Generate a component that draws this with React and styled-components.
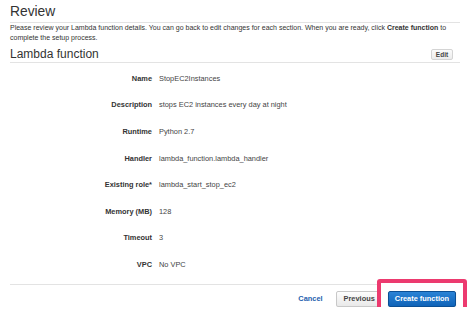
import React from "react";
import styled, { createGlobalStyle } from "styled-components";

const GlobalStyle = createGlobalStyle`
  html, body {
    margin: 0;
    padding: 0;
    background: #fff;
  }
  body {
    font-family: "Liberation Sans", Arial, Helvetica, sans-serif;
    color: #333;
  }
`;

const Page = styled.div`
  width: 450px;
  padding: 0 14px 0 10px;
`;

const Title = styled.h2`
  margin: 0;
  padding: 4px 0 2px;
  font-size: 13.8px;
  font-weight: normal;
  line-height: 16px;
  color: #333;
  border-bottom: 1px solid #e3e3e3;
`;

const Intro = styled.p`
  margin: 0;
  font-size: 7px;
  line-height: 10px;
  color: #333;
  b {
    font-weight: bold;
  }
`;

const SectionHeader = styled.div`
  display: flex;
  justify-content: space-between;
  align-items: flex-end;
  margin-top: 4px;
  padding-bottom: 1px;
  border-bottom: 1px solid #e3e3e3;
`;

const SectionTitle = styled.h3`
  margin: 0;
  font-size: 12px;
  font-weight: normal;
  line-height: 14px;
  color: #333;
`;

const SmallButton = styled.button`
  font-family: inherit;
  font-size: 6.5px;
  font-weight: bold;
  color: #444;
  height: 11px;
  width: 22px;
  padding: 0;
  margin: 0 7px 1px 0;
  border: 1px solid #d4d4d4;
  border-radius: 2px;
  background: linear-gradient(#fbfbfb, #ececec);
`;

const DetailList = styled.dl`
  margin: 0;
  padding-top: 2px;
`;

const Row = styled.div`
  display: grid;
  grid-template-columns: 142px 1fr;
  column-gap: 7px;
  align-items: center;
  height: 26.6px;
`;

const Label = styled.dt`
  text-align: right;
  font-size: 7.4px;
  font-weight: bold;
  color: #333;
`;

const Value = styled.dd`
  margin: 0;
  font-size: 7.4px;
  color: #444;
`;

const Footer = styled.div`
  display: flex;
  justify-content: flex-end;
  align-items: center;
  margin-top: 6px;
  padding: 6px 4px 0 0;
  border-top: 1px solid #e3e3e3;
`;

const LinkButton = styled.button`
  font-family: inherit;
  font-size: 7.4px;
  font-weight: bold;
  color: #1d5fae;
  background: none;
  border: 0;
  padding: 0;
  margin-right: 13px;
`;

const Button = styled.button`
  position: relative;
  font-family: inherit;
  font-size: 7.4px;
  font-weight: bold;
  height: 16px;
  padding: 0 ${(p) => (p.$primary ? "6px" : "7px")};
  margin-right: ${(p) => (p.$primary ? "0" : "5px")};
  border-radius: 2px;
  border: 1px solid ${(p) => (p.$primary ? "#0b4f94" : "#c8c8c8")};
  color: ${(p) => (p.$primary ? "#fff" : "#444")};
  background: ${(p) =>
    p.$primary
      ? "linear-gradient(#2a83d6, #0f63b8)"
      : "linear-gradient(#fdfdfd, #e9e9e9)"};
  box-shadow: ${(p) =>
    p.$primary ? "0 1px 1px rgba(0,0,0,0.2)" : "0 1px 0 rgba(0,0,0,0.05)"};
`;

const Highlight = styled.div`
  position: relative;
  display: flex;
`;

const HighlightFrame = styled.span`
  position: absolute;
  left: -11px;
  right: -11px;
  top: -12px;
  bottom: -10px;
  border: 4px solid #ec3a6f;
  border-radius: 3px;
  background: #fff;
`;

const details = [
  ["Name", "StopEC2Instances"],
  ["Description", "stops EC2 instances every day at night"],
  ["Runtime", "Python 2.7"],
  ["Handler", "lambda_function.lambda_handler"],
  ["Existing role*", "lambda_start_stop_ec2"],
  ["Memory (MB)", "128"],
  ["Timeout", "3"],
  ["VPC", "No VPC"],
];

export default function App() {
  return (
    <>
      <GlobalStyle />
      <Page>
        <Title>Review</Title>
        <Intro>
          Please review your Lambda function details. You can go back to edit
          changes for each section. When you are ready, click{" "}
          <b>Create function</b> to complete the setup process.
        </Intro>
        <SectionHeader>
          <SectionTitle>Lambda function</SectionTitle>
          <SmallButton>Edit</SmallButton>
        </SectionHeader>
        <DetailList>
          {details.map(([label, value]) => (
            <Row key={label}>
              <Label>{label}</Label>
              <Value>{value}</Value>
            </Row>
          ))}
        </DetailList>
        <Footer>
          <LinkButton>Cancel</LinkButton>
          <Button>Previous</Button>
          <Highlight>
            <HighlightFrame />
            <Button $primary>Create function</Button>
          </Highlight>
        </Footer>
      </Page>
    </>
  );
}
